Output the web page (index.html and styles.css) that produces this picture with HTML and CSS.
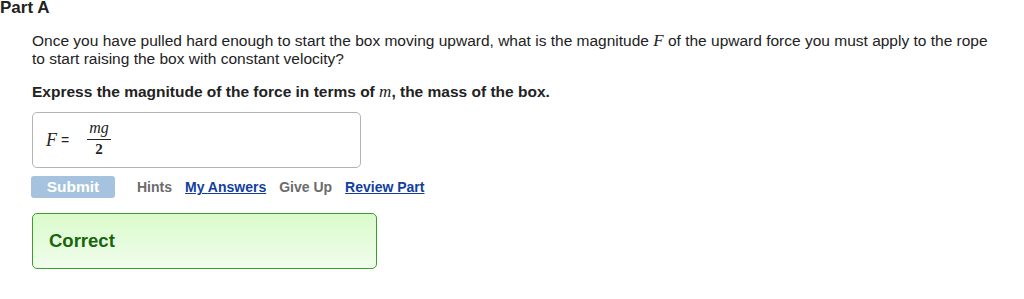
FILE: index.html
```html
<!DOCTYPE html>
<html>
<head>
<meta charset="utf-8">
<link rel="stylesheet" href="styles.css">
</head>
<body>
<h2 class="part-title">Part A</h2>
<div class="part-body">
  <p class="question">Once you have pulled hard enough to start the box moving upward, what is the magnitude <span class="math">F</span> of the upward force you must apply to the rope to start raising the box with constant velocity?</p>
  <p class="instruction">Express the magnitude of the force in terms of <span class="math">m</span>, the mass of the box.</p>
  <div class="answer-box">
    <span class="math lhs">F</span><span class="eq">=</span>
    <span class="frac"><span class="num math">mg</span><span class="den">2</span></span>
  </div>
  <div class="actions">
    <span class="btn-submit">Submit</span>
    <span class="act muted">Hints</span>
    <a class="act link" href="#">My Answers</a>
    <span class="act muted">Give Up</span>
    <a class="act link" href="#">Review Part</a>
  </div>
  <div class="feedback">Correct</div>
</div>
</body>
</html>
```
FILE: styles.css
```css
html, body {
  margin: 0;
  padding: 0;
  background: #fff;
}
body {
  font-family: "Liberation Sans", Arial, sans-serif;
  color: #222;
  width: 1024px;
  height: 299px;
  overflow: hidden;
}
.part-title {
  margin: 0;
  font-size: 17px;
  line-height: 16px;
  font-weight: bold;
  color: #222;
}
.part-body {
  padding-left: 32px;
}
.question {
  margin: 16px 0 0 0;
  font-size: 15.5px;
  line-height: 18px;
  width: 968px;
}
.math {
  font-family: "Liberation Serif", "DejaVu Serif", serif;
  font-style: italic;
  font-size: 17px;
  line-height: 1;
  font-weight: normal;
}
.instruction {
  margin: 15px 0 0 0;
  font-size: 15.5px;
  line-height: 18px;
  font-weight: bold;
}
.answer-box {
  margin-top: 11px;
  width: 314px;
  height: 54px;
  border: 1px solid #b4b4b4;
  border-radius: 5px;
  display: flex;
  align-items: center;
  padding-left: 13px;
}
.lhs {
  font-size: 18px;
}
.eq {
  font-size: 14px;
  margin-left: 4px;
  margin-right: 18px;
}
.frac {
  display: inline-flex;
  flex-direction: column;
  align-items: center;
  margin-top: -3px;
}
.frac .num {
  font-size: 16px;
  line-height: 16px;
  padding: 0 2px 3px;
  border-bottom: 1px solid #222;
}
.frac .den {
  font-family: "Liberation Serif", "DejaVu Serif", serif;
  font-size: 15px;
  line-height: 16px;
  padding-top: 1px;
  font-weight: bold;
}
.actions {
  margin-top: 8px;
  display: flex;
  align-items: center;
  height: 22px;
}
.btn-submit {
  display: inline-block;
  width: 84px;
  height: 22px;
  line-height: 22px;
  text-align: center;
  background: #a5c3de;
  color: #fff;
  font-weight: bold;
  font-size: 15.5px;
  border-radius: 3px;
  margin-left: -1px;
  margin-right: 22px;
}
.act {
  font-size: 14px;
  font-weight: bold;
  margin-right: 13px;
}
.muted {
  color: #6b6b6b;
}
.link {
  color: #123e9c;
  text-decoration: underline;
}
.feedback {
  margin-top: 15px;
  width: 327px;
  height: 54px;
  border: 1px solid #3a9e2a;
  border-radius: 5px;
  background: linear-gradient(to bottom, #dafbcb, #f0fdec);
  color: #19650d;
  font-weight: bold;
  font-size: 18.5px;
  display: flex;
  align-items: center;
  padding-left: 16px;
}
```
